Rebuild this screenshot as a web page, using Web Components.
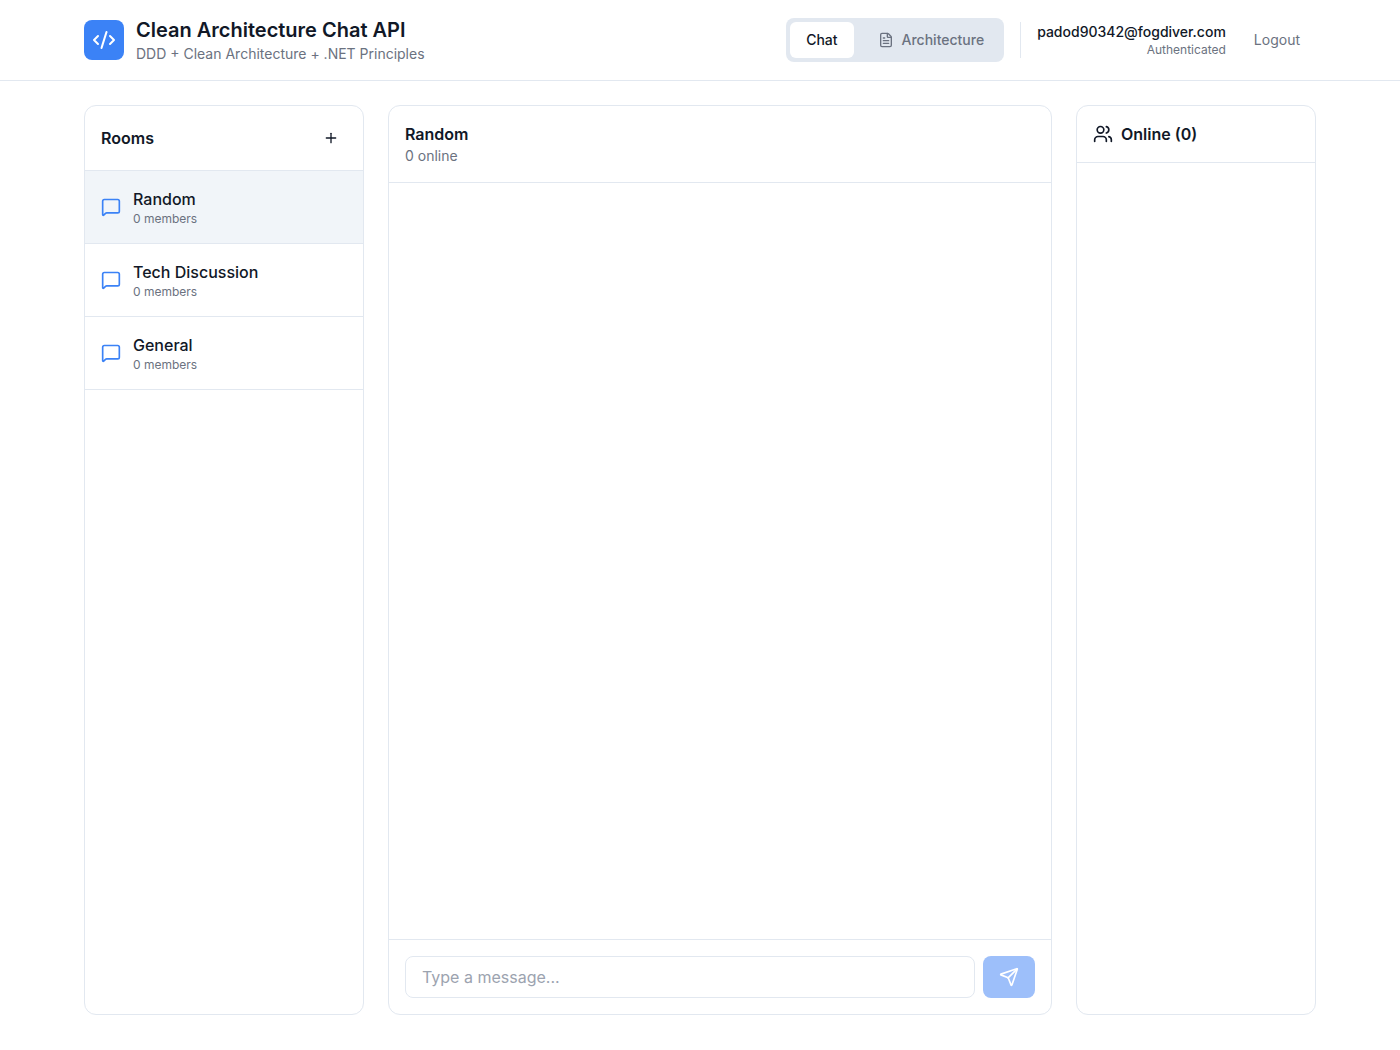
<!DOCTYPE html>
<html lang="en">
<head>
<meta charset="utf-8">
<title>Clean Architecture Chat API</title>
<style>
    html, body { margin: 0; padding: 0; background: #ffffff; }
    body { font-family: Inter, "Liberation Sans", sans-serif; color: #111827; }
</style>
</head>
<body>
<chat-app></chat-app>

<script>
const ICONS = {
    code: '<path d="m18 16 4-4-4-4"/><path d="m6 8-4 4 4 4"/><path d="m14.5 4-5 16"/>',
    file: '<path d="M6 22a2 2 0 0 1-2-2V4a2 2 0 0 1 2-2h8a2.4 2.4 0 0 1 1.704.706l3.588 3.588A2.4 2.4 0 0 1 20 8v12a2 2 0 0 1-2 2z"/><path d="M14 2v5a1 1 0 0 0 1 1h5"/><path d="M10 9H8"/><path d="M16 13H8"/><path d="M16 17H8"/>',
    plus: '<path d="M5 12h14"/><path d="M12 5v14"/>',
    message: '<path d="M22 17a2 2 0 0 1-2 2H6.828a2 2 0 0 0-1.414.586l-2.202 2.202A.71.71 0 0 1 2 21.286V5a2 2 0 0 1 2-2h16a2 2 0 0 1 2 2z"/>',
    users: '<path d="M16 21v-2a4 4 0 0 0-4-4H6a4 4 0 0 0-4 4v2"/><path d="M16 3.128a4 4 0 0 1 0 7.744"/><path d="M22 21v-2a4 4 0 0 0-3-3.87"/><circle cx="9" cy="7" r="4"/>',
    send: '<path d="M14.536 21.686a.5.5 0 0 0 .937-.024l6.5-19a.496.496 0 0 0-.635-.635l-19 6.5a.5.5 0 0 0-.024.937l7.93 3.18a2 2 0 0 1 1.112 1.11z"/><path d="m21.854 2.147-10.94 10.939"/>'
};

class AppIcon extends HTMLElement {
    connectedCallback() {
        const size = this.getAttribute('size') || 20;
        const shadow = this.shadowRoot || this.attachShadow({ mode: 'open' });
        shadow.innerHTML = `
            <style>
                :host { display: inline-flex; flex: none; width: ${size}px; height: ${size}px; }
                svg { display: block; }
            </style>
            <svg width="${size}" height="${size}" viewBox="0 0 24 24" fill="none" stroke="currentColor"
                stroke-width="2" stroke-linecap="round" stroke-linejoin="round">${ICONS[this.getAttribute('name')]}</svg>
        `;
    }
}
customElements.define('app-icon', AppIcon);

class AppHeader extends HTMLElement {
    constructor() {
        super();
        this.attachShadow({ mode: 'open' });
        this.shadowRoot.innerHTML = `
            <style>
                :host { display: block; height: 80px; border-bottom: 1px solid #e2e8f0; background: #fff; }
                .inner {
                    box-sizing: border-box;
                    width: 1280px;
                    height: 100%;
                    margin: 0 auto;
                    padding: 0 24px;
                    display: flex;
                    align-items: center;
                    justify-content: space-between;
                }
                .brand { display: flex; align-items: center; gap: 12px; }
                .logo {
                    width: 40px; height: 40px; border-radius: 8px;
                    background: #3b82f6; color: #fff;
                    display: flex; align-items: center; justify-content: center;
                }
                h1 { margin: 0; font-size: 20px; line-height: 28px; font-weight: 600; color: #111827; }
                .sub { font-size: 14px; line-height: 20px; color: #6b7280; }
                .right { display: flex; align-items: center; gap: 16px; }
                .tabs {
                    display: flex; align-items: center; gap: 8px;
                    box-sizing: border-box; height: 44px; padding: 4px;
                    background: #e2e8f0; border-radius: 8px;
                }
                .tab {
                    display: flex; align-items: center; gap: 8px;
                    height: 36px; padding: 0 16px; border-radius: 6px;
                    font-size: 14px; line-height: 20px; font-weight: 500; color: #6b7280;
                }
                .tab.active { background: #fff; color: #111827; }
                .divider { width: 1px; height: 36px; background: #e2e8f0; }
                .user { text-align: right; }
                .email { font-size: 14px; line-height: 20px; font-weight: 500; color: #111827; }
                .status { font-size: 12px; line-height: 16px; color: #6b7280; }
                .logout {
                    font-size: 14px; line-height: 20px; font-weight: 400; color: #6b7280;
                    padding: 0 16px 0 12px;
                }
            </style>
            <div class="inner">
                <div class="brand">
                    <div class="logo"><app-icon name="code" size="24"></app-icon></div>
                    <div>
                        <h1>Clean Architecture Chat API</h1>
                        <div class="sub">DDD + Clean Architecture + .NET Principles</div>
                    </div>
                </div>
                <div class="right">
                    <div class="tabs">
                        <div class="tab active">Chat</div>
                        <div class="tab"><app-icon name="file" size="16"></app-icon>Architecture</div>
                    </div>
                    <div class="divider"></div>
                    <div class="user">
                        <div class="email">padod90342@fogdiver.com</div>
                        <div class="status">Authenticated</div>
                    </div>
                    <div class="logout">Logout</div>
                </div>
            </div>
        `;
    }
}
customElements.define('app-header', AppHeader);

class PanelCard extends HTMLElement {
    constructor() {
        super();
        this.attachShadow({ mode: 'open' });
        this.shadowRoot.innerHTML = `
            <style>
                :host {
                    display: flex; flex-direction: column; min-width: 0;
                    box-sizing: border-box; height: 100%;
                    background: #fff; border: 1px solid #e2e8f0; border-radius: 12px;
                    overflow: hidden;
                }
            </style>
            <slot></slot>
        `;
    }
}
customElements.define('panel-card', PanelCard);

class RoomItem extends HTMLElement {
    constructor() {
        super();
        this.attachShadow({ mode: 'open' });
        this.shadowRoot.innerHTML = `
            <style>
                :host {
                    display: flex; align-items: center; gap: 12px;
                    box-sizing: border-box; height: 73px; padding: 0 16px;
                    border-bottom: 1px solid #e2e8f0;
                }
                :host([active]) { background: #f1f5f9; }
                app-icon { color: #3b82f6; }
                .name { font-size: 16px; line-height: 24px; font-weight: 500; color: #111827; }
                .meta { font-size: 12px; line-height: 16px; color: #6b7280; }
            </style>
            <app-icon name="message" size="20"></app-icon>
            <div>
                <div class="name"><slot></slot></div>
                <div class="meta">0 members</div>
            </div>
        `;
    }
}
customElements.define('room-item', RoomItem);

class RoomsPanel extends HTMLElement {
    constructor() {
        super();
        this.attachShadow({ mode: 'open' });
        this.shadowRoot.innerHTML = `
            <style>
                :host { display: block; height: 100%; }
                .head {
                    display: flex; align-items: center; justify-content: space-between;
                    box-sizing: border-box; height: 65px; padding: 0 24px 0 16px;
                    border-bottom: 1px solid #e2e8f0;
                }
                h2 { margin: 0; font-size: 16px; line-height: 24px; font-weight: 600; color: #111827; }
                .add { display: flex; color: #111827; }
            </style>
            <panel-card>
                <div class="head">
                    <h2>Rooms</h2>
                    <div class="add"><app-icon name="plus" size="16"></app-icon></div>
                </div>
                <room-item active>Random</room-item>
                <room-item>Tech Discussion</room-item>
                <room-item>General</room-item>
            </panel-card>
        `;
    }
}
customElements.define('rooms-panel', RoomsPanel);

class ChatPanel extends HTMLElement {
    constructor() {
        super();
        this.attachShadow({ mode: 'open' });
        this.shadowRoot.innerHTML = `
            <style>
                :host { display: block; height: 100%; min-width: 0; }
                .head {
                    box-sizing: border-box; height: 77px; padding: 16px;
                    border-bottom: 1px solid #e2e8f0;
                }
                h2 { margin: 0; font-size: 16px; line-height: 24px; font-weight: 600; color: #111827; }
                .sub { font-size: 14px; line-height: 20px; color: #6b7280; }
                .messages { flex: 1; }
                .compose {
                    display: flex; gap: 8px;
                    padding: 16px; border-top: 1px solid #e2e8f0;
                }
                input {
                    flex: 1; min-width: 0; box-sizing: border-box; height: 42px;
                    padding: 0 16px; border: 1px solid #e2e8f0; border-radius: 8px;
                    background: #fff; font: 400 16px Inter, "Liberation Sans", sans-serif; color: #111827;
                }
                input::placeholder { color: #9ca3af; opacity: 1; }
                .send {
                    width: 52px; height: 42px; border-radius: 8px;
                    background: #9dbffa; color: #fff;
                    display: flex; align-items: center; justify-content: center;
                }
            </style>
            <panel-card>
                <div class="head">
                    <h2>Random</h2>
                    <div class="sub">0 online</div>
                </div>
                <div class="messages"></div>
                <div class="compose">
                    <input type="text" placeholder="Type a message...">
                    <div class="send"><app-icon name="send" size="20"></app-icon></div>
                </div>
            </panel-card>
        `;
    }
}
customElements.define('chat-panel', ChatPanel);

class OnlinePanel extends HTMLElement {
    constructor() {
        super();
        this.attachShadow({ mode: 'open' });
        this.shadowRoot.innerHTML = `
            <style>
                :host { display: block; height: 100%; }
                .head {
                    display: flex; align-items: center; gap: 8px;
                    box-sizing: border-box; height: 57px; padding: 0 16px;
                    border-bottom: 1px solid #e2e8f0;
                    font-size: 16px; font-weight: 600; color: #111827;
                }
            </style>
            <panel-card>
                <div class="head"><app-icon name="users" size="20"></app-icon>Online (0)</div>
            </panel-card>
        `;
    }
}
customElements.define('online-panel', OnlinePanel);

class ChatApp extends HTMLElement {
    constructor() {
        super();
        this.attachShadow({ mode: 'open' });
        this.shadowRoot.innerHTML = `
            <style>
                :host { display: block; height: 1050px; overflow: hidden; }
                main {
                    box-sizing: border-box; width: 1280px; height: 958px;
                    margin: 0 auto; padding: 24px;
                    display: grid; grid-template-columns: 280px 1fr 240px; gap: 24px;
                }
            </style>
            <app-header></app-header>
            <main>
                <rooms-panel></rooms-panel>
                <chat-panel></chat-panel>
                <online-panel></online-panel>
            </main>
        `;
    }
}
customElements.define('chat-app', ChatApp);
</script>
</body>
</html>
